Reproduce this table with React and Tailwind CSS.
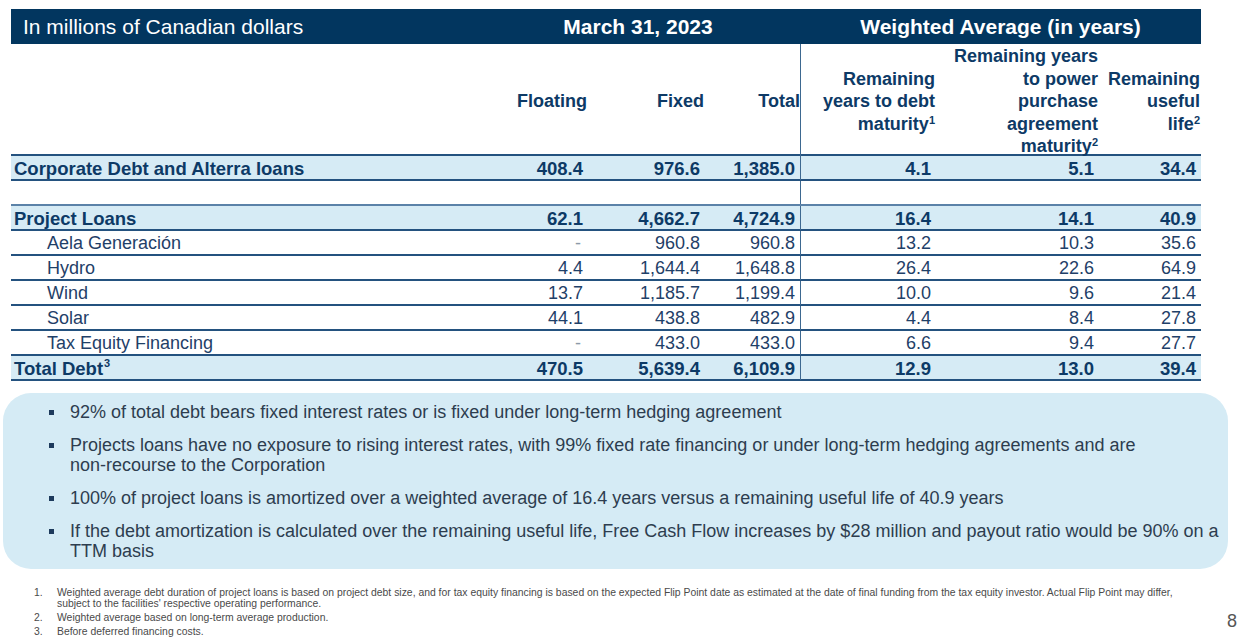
import React from "react";

const cols = "grid grid-cols-[479px_98px_117px_95px_136px_163px_102px]";

const rows = [
  { label: "Corporate Debt and Alterra loans", vals: ["408.4", "976.6", "1,385.0", "4.1", "5.1", "34.4"], bold: true },
  { empty: true },
  { label: "Project Loans", vals: ["62.1", "4,662.7", "4,724.9", "16.4", "14.1", "40.9"], bold: true },
  { label: "Aela Generación", vals: ["-", "960.8", "960.8", "13.2", "10.3", "35.6"] },
  { label: "Hydro", vals: ["4.4", "1,644.4", "1,648.8", "26.4", "22.6", "64.9"] },
  { label: "Wind", vals: ["13.7", "1,185.7", "1,199.4", "10.0", "9.6", "21.4"] },
  { label: "Solar", vals: ["44.1", "438.8", "482.9", "4.4", "8.4", "27.8"] },
  { label: "Tax Equity Financing", vals: ["-", "433.0", "433.0", "6.6", "9.4", "27.7"] },
  { label: "Total Debt", sup: "3", vals: ["470.5", "5,639.4", "6,109.9", "12.9", "13.0", "39.4"], bold: true },
];

const bullets = [
  "92% of total debt bears fixed interest rates or is fixed under long-term hedging agreement",
  <>
    Projects loans have no exposure to rising interest rates, with 99% fixed rate financing or under long-term hedging agreements and are{" "}
    <span className="whitespace-nowrap">non-recourse</span> to the Corporation
  </>,
  "100% of project loans is amortized over a weighted average of 16.4 years versus a remaining useful life of 40.9 years",
  "If the debt amortization is calculated over the remaining useful life, Free Cash Flow increases by $28 million and payout ratio would be 90% on a TTM basis",
];

const notes = [
  "Weighted average debt duration of project loans is based on project debt size, and for tax equity financing is based on the expected Flip Point date as estimated at the date of final funding from the tax equity investor. Actual Flip Point may differ, subject to the facilities' respective operating performance.",
  "Weighted average based on long-term average production.",
  "Before deferred financing costs.",
];

const DataRow = ({ row }) => {
  if (row.empty) {
    return (
      <div className={`${cols} h-[25px] border-b-2 border-[#5b82a8]`}>
        <div className="col-span-4" />
        <div className="col-span-3 border-l-[1.5px] border-[#3d6890]" />
      </div>
    );
  }
  const tone = row.bold
    ? "bg-[#d6ebf5] font-bold text-[18.5px] text-[#0d3a66]"
    : "text-[18px] text-[#1f4068]";
  return (
    <div className={`${cols} h-[25px] items-stretch border-b-2 border-[#24527f] leading-[23px] ${tone}`}>
      <div className={`flex items-center pt-[1px] ${row.bold ? "pl-[3px]" : "pl-[36px]"}`}>
        {row.label}
        {row.sup && <sup className="text-[11px] top-[-6px] ml-px">{row.sup}</sup>}
      </div>
      {row.vals.map((v, i) => (
        <div
          key={i}
          className={`flex items-center justify-end pt-[1px] pr-[5px] ${i === 3 ? "border-l-[1.5px] border-[#3d6890]" : ""} ${v === "-" ? "text-[#8c9aa8] pr-[7px]" : ""}`}
        >
          {v}
        </div>
      ))}
    </div>
  );
};

const HeadCell = ({ children, line }) => (
  <div className={`flex items-center justify-end pr-px pt-[1px] text-right ${line ? "border-l-[1.5px] border-[#3d6890]" : ""}`}>
    <div>{children}</div>
  </div>
);

const Sup = ({ n }) => <sup className="text-[11px] top-[-6px]">{n}</sup>;

export default function App() {
  return (
    <div className="relative w-[1245px] h-[639px] overflow-hidden bg-white font-['Liberation_Sans',Arial,sans-serif]">
      <div className="ml-[11px] pt-[9px] w-[1190px]">
        {/* title bar */}
        <div className={`${cols} h-[35px] items-center bg-[#02365f] text-white text-[21px]`}>
          <div className="pl-3">In millions of Canadian dollars</div>
          <div className="col-span-3 text-center font-bold pr-[14px]">March 31, 2023</div>
          <div className="col-span-3 text-center font-bold">Weighted Average (in years)</div>
        </div>

        {/* column headers */}
        <div className={`${cols} h-[112px] border-b-2 border-[#24527f] text-[18px] font-bold leading-[22.5px] text-[#0d3a66]`}>
          <div />
          <HeadCell>Floating</HeadCell>
          <HeadCell>Fixed</HeadCell>
          <div className="flex items-center justify-end pt-[1px] text-right">Total</div>
          <HeadCell line>
            Remaining
            <br />
            years to debt
            <br />
            maturity<Sup n="1" />
          </HeadCell>
          <HeadCell>
            Remaining years
            <br />
            to power
            <br />
            purchase
            <br />
            agreement
            <br />
            maturity<Sup n="2" />
          </HeadCell>
          <HeadCell>
            Remaining
            <br />
            useful
            <br />
            life<Sup n="2" />
          </HeadCell>
        </div>

        {rows.map((r, i) => (
          <DataRow key={i} row={r} />
        ))}
      </div>

      {/* highlights */}
      <div className="ml-[3px] mt-[12px] w-[1225px] rounded-[28px] bg-[#d5ebf5] pt-[9px] pb-[8px] pl-[46px] pr-[6px] flex flex-col gap-[13px] text-[18px] leading-[20px] text-[#2d3d4f]">
        {bullets.map((b, i) => (
          <div key={i} className="flex">
            <div className="w-[21px] shrink-0 pt-[8px]">
              <div className="w-[5px] h-[5px] bg-[#1d3a5c]" />
            </div>
            <div>{b}</div>
          </div>
        ))}
      </div>

      {/* footnotes */}
      <div className="flex mt-[18px]">
        <ol className="pl-[34px] w-[1182px] flex flex-col gap-[3px] text-[10.4px] leading-[11px] text-[#4a4a4a]">
          {notes.map((n, i) => (
            <li key={i} className="flex">
              <span className="w-[23px] shrink-0">{i + 1}.</span>
              <span>{n}</span>
            </li>
          ))}
        </ol>
        <div className="ml-auto mr-[8px] self-start mt-[24px] text-[18px] leading-[20px] text-[#555]">8</div>
      </div>
    </div>
  );
}
